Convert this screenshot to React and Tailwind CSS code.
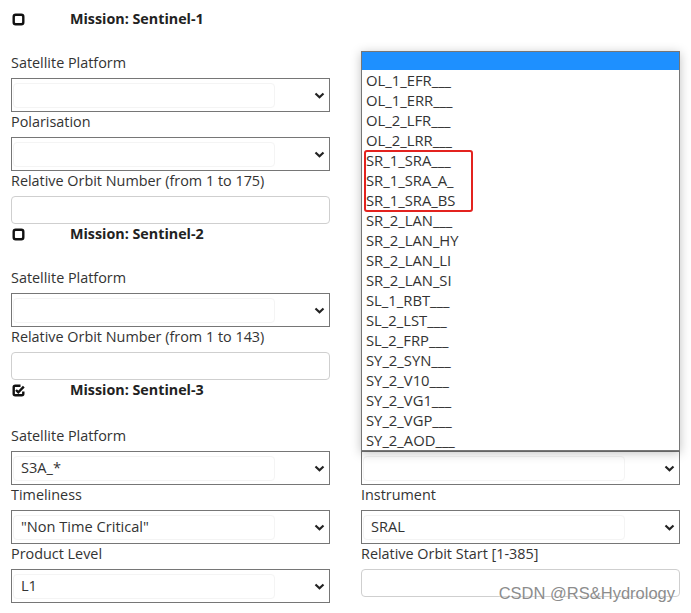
import React from "react";

const products = [
  "OL_1_EFR___",
  "OL_1_ERR___",
  "OL_2_LFR___",
  "OL_2_LRR___",
  "SR_1_SRA___",
  "SR_1_SRA_A_",
  "SR_1_SRA_BS",
  "SR_2_LAN___",
  "SR_2_LAN_HY",
  "SR_2_LAN_LI",
  "SR_2_LAN_SI",
  "SL_1_RBT___",
  "SL_2_LST___",
  "SL_2_FRP___",
  "SY_2_SYN___",
  "SY_2_V10___",
  "SY_2_VG1___",
  "SY_2_VGP___",
  "SY_2_AOD___",
];

const Chevron = () => (
  <svg width="11" height="7" viewBox="0 0 11 7" className="mr-[4px]">
    <polyline points="1.5,1.5 5.5,5.2 9.5,1.5" fill="none" stroke="#222" strokeWidth="2.2" />
  </svg>
);

const Checkbox = ({ checked }) => (
  <svg width="13" height="13" viewBox="0 0 13 13" className="shrink-0">
    {checked ? (
      <>
        <path d="M8.5 1.7H3.2Q1.7 1.7 1.7 3.2v6.6Q1.7 11.3 3.2 11.3h6.6Q11.3 11.3 11.3 9.8V7.5" fill="none" stroke="#111" strokeWidth="2.4" />
        <polyline points="4,6 6.3,8.3 11.8,2.6" fill="none" stroke="#111" strokeWidth="2.4" />
      </>
    ) : (
      <rect x="1.7" y="1.7" width="9.6" height="9.6" rx="2" fill="none" stroke="#111" strokeWidth="2.4" />
    )}
  </svg>
);

const Header = ({ title, checked }) => (
  <div className="flex items-center h-5">
    <div className="w-[59px] pl-[1px]">
      <Checkbox checked={checked} />
    </div>
    <span className="text-[14.3px] font-bold text-[#222]">{title}</span>
  </div>
);

const Label = ({ children }) => (
  <div className="h-5 leading-5 text-[14.4px] text-[#333] whitespace-nowrap">{children}</div>
);

const Select = ({ value }) => (
  <div className="mt-[5px] h-[34px] border border-[#767676] bg-white flex items-center justify-between pl-[1px]">
    <div className="w-[262px] h-[25px] rounded-[4px] border border-[#f4f4f4] flex items-center pl-[7px] text-[14.6px] text-[#333]">
      {value}
    </div>
    <Chevron />
  </div>
);

const Input = () => (
  <div className="mt-[5px] h-[28px] rounded-[4px] border border-[#cfcfcf] bg-white" />
);

const Dropdown = () => (
  <div className="absolute bottom-full left-0 w-full border border-[#767676] bg-white shadow-[0_2px_10px_rgba(0,0,0,0.25)] z-10">
    <div className="h-[18px] bg-[#1e90ff]" />
    {products.map((p) => (
      <div key={p} className="h-5 leading-5 pl-[4px] text-[14.8px] text-[#333]">
        {p}
      </div>
    ))}
    <div className="absolute top-[98px] left-[2px] w-[109px] h-[62px] border-2 border-[#e3231f] rounded-[3px]" />
  </div>
);

export default function App() {
  return (
    <div className="relative bg-white min-h-[613px] px-[11px] pt-[9px] font-['Open_Sans','Noto_Sans',sans-serif]">
      {/* Sentinel-1 */}
      <Header title="Mission: Sentinel-1" />
      <div className="grid grid-cols-2 gap-x-[31px] mt-6">
        <div>
          <Label>Satellite Platform</Label>
          <Select />
          <Label>Polarisation</Label>
          <Select />
          <Label>Relative Orbit Number (from 1 to 175)</Label>
          <Input />
        </div>
        <div />
      </div>

      {/* Sentinel-2 */}
      <Header title="Mission: Sentinel-2" />
      <div className="grid grid-cols-2 gap-x-[31px] mt-6">
        <div>
          <Label>Satellite Platform</Label>
          <Select />
          <Label>Relative Orbit Number (from 1 to 143)</Label>
          <Input />
        </div>
        <div />
      </div>

      {/* Sentinel-3 */}
      <Header title="Mission: Sentinel-3" checked />
      <div className="grid grid-cols-2 gap-x-[31px] mt-[26px]">
        <div>
          <Label>Satellite Platform</Label>
          <Select value="S3A_*" />
          <Label>Timeliness</Label>
          <Select value={'"Non Time Critical"'} />
          <Label>Product Level</Label>
          <Select value="L1" />
        </div>
        <div>
          {/* label of the product type select sits under the open list */}
          <div className="h-5" />
          <div className="relative">
            <Dropdown />
            <Select />
          </div>
          <Label>Instrument</Label>
          <Select value="SRAL" />
          <Label>Relative Orbit Start [1-385]</Label>
          <Input />
        </div>
      </div>

      <div className="absolute right-[16px] top-[581px] text-[16.5px] text-[#8c8c8c] [text-shadow:0_0_2px_#fff] font-['Liberation_Sans',sans-serif] z-20">
        CSDN @RS&amp;Hydrology
      </div>
    </div>
  );
}
